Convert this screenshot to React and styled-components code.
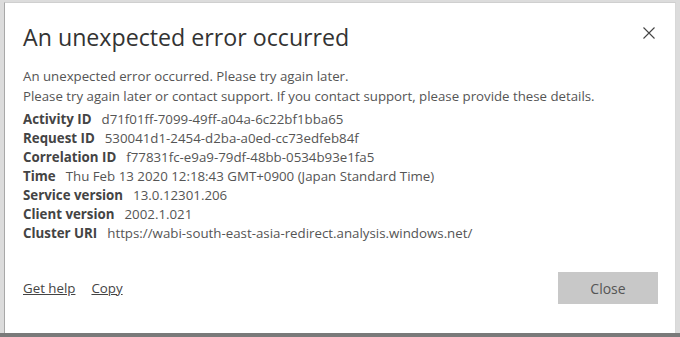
import React from 'react'
import styled, { createGlobalStyle } from 'styled-components'

const GlobalStyle = createGlobalStyle`
  html, body {
    margin: 0;
    padding: 0;
    background: #dcdcdc;
  }
  body {
    font-family: "Open Sans", "Noto Sans", sans-serif;
  }
`

const details = [
    { label: 'Activity ID', value: 'd71f01ff-7099-49ff-a04a-6c22bf1bba65' },
    { label: 'Request ID', value: '530041d1-2454-d2ba-a0ed-cc73edfeb84f' },
    { label: 'Correlation ID', value: 'f77831fc-e9a9-79df-48bb-0534b93e1fa5' },
    { label: 'Time', value: 'Thu Feb 13 2020 12:18:43 GMT+0900 (Japan Standard Time)' },
    { label: 'Service version', value: '13.0.12301.206' },
    { label: 'Client version', value: '2002.1.021' },
    { label: 'Cluster URI', value: 'https://wabi-south-east-asia-redirect.analysis.windows.net/' },
]

function App() {
    return (
        <>
            <GlobalStyle />
            <Backdrop>
                <Dialog>
                    <Header>
                        <Title>An unexpected error occurred</Title>
                        <CloseIcon aria-label="Close">
                            <svg width="12" height="12" viewBox="0 0 12 12">
                                <path d="M0.5 0.5 L11.5 11.5 M11.5 0.5 L0.5 11.5" stroke="#444" strokeWidth="1.1" fill="none" />
                            </svg>
                        </CloseIcon>
                    </Header>
                    <Message>
                        <p>An unexpected error occurred. Please try again later.</p>
                        <p>Please try again later or contact support. If you contact support, please provide these details.</p>
                    </Message>
                    <Details>
                        {details.map((d) => (
                            <DetailRow key={d.label}>
                                <b>{d.label}</b>
                                <span>{d.value}</span>
                            </DetailRow>
                        ))}
                    </Details>
                    <Footer>
                        <Links>
                            <a href="#help">Get help</a>
                            <a href="#copy">Copy</a>
                        </Links>
                        <CloseButton>Close</CloseButton>
                    </Footer>
                </Dialog>
            </Backdrop>
        </>
    )
}

export default App

const Backdrop = styled.div`
width: 680px;
height: 337px;
box-sizing: border-box;
padding: 2px 4px 0 4px;
background: #dcdcdc;
border-bottom: 4px solid #7a7a7a;
display: flex;
`

const Dialog = styled.div`
flex: 1;
height: 331px;
box-sizing: border-box;
background: #fff;
border-left: 1px solid #a8a8a8;
border-top: 1px solid #cfcfcf;
border-right: 1px solid #d8d8d8;
padding: 0 18px 0 18px;
display: flex;
flex-direction: column;
color: #555;
`

const Header = styled.div`
display: flex;
justify-content: space-between;
align-items: flex-start;
height: 58px;
`

const Title = styled.h1`
margin: 19px 0 0 0;
font-size: 23.2px;
line-height: 31px;
font-weight: 400;
color: #333;
`

const CloseIcon = styled.button`
border: none;
background: none;
padding: 0;
margin: 24px 2px 0 0;
width: 12px;
height: 12px;
display: flex;
cursor: pointer;
`

const Message = styled.div`
font-size: 13.25px;
line-height: 20px;
margin-top: 5px;

p {
    margin: 0;
}
`

const Details = styled.div`
margin-top: 4px;
font-size: 13.3px;
line-height: 19px;
`

const DetailRow = styled.div`
display: flex;
gap: 10px;

b {
    font-weight: 700;
    color: #444;
}
`

const Footer = styled.div`
margin-top: auto;
margin-bottom: 29px;
display: flex;
justify-content: space-between;
align-items: center;
`

const Links = styled.div`
display: flex;
gap: 16px;
font-size: 13.3px;

a {
    color: #444;
    text-decoration: underline;
}
`

const CloseButton = styled.button`
width: 100px;
height: 32px;
margin-right: -1px;
border: none;
background: #c8c8c8;
color: #555;
font-family: inherit;
font-size: 14px;
`
